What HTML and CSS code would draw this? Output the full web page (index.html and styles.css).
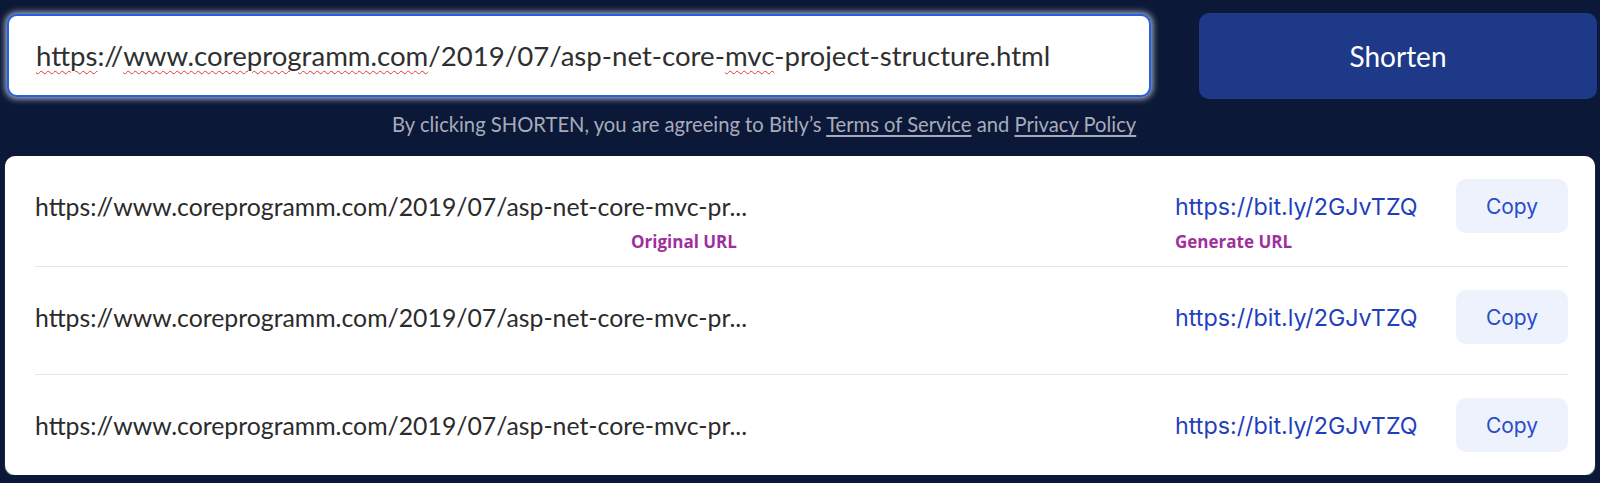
FILE: index.html
```html
<!DOCTYPE html>
<html lang="en">
<head>
<meta charset="utf-8">
<title>Bitly – Shorten</title>
<link rel="stylesheet" href="styles.css">
</head>
<body>
<div class="page">
  <div class="shorten-bar">
    <div class="url-input"><span class="spell">https</span>://<span class="spell">www.coreprogramm.com</span>/2019/07/asp-net-core-<span class="spell">mvc</span>-project-structure.html</div>
    <button class="shorten-btn">Shorten</button>
  </div>
  <p class="terms">By clicking SHORTEN, you are agreeing to Bitly’s <a href="#">Terms of Service</a> and <a href="#">Privacy Policy</a></p>

  <div class="results">
    <div class="row row--labeled">
      <div class="long-url">https://www.coreprogramm.com/2019/07/asp-net-core-mvc-pr...</div>
      <div class="short-url">https://bit.ly/2GJvTZQ</div>
      <button class="copy-btn">Copy</button>
      <div class="label label--orig">Original URL</div>
      <div class="label">Generate URL</div>
    </div>
    <div class="row">
      <div class="long-url">https://www.coreprogramm.com/2019/07/asp-net-core-mvc-pr...</div>
      <div class="short-url">https://bit.ly/2GJvTZQ</div>
      <button class="copy-btn">Copy</button>
    </div>
    <div class="row row--last">
      <div class="long-url">https://www.coreprogramm.com/2019/07/asp-net-core-mvc-pr...</div>
      <div class="short-url">https://bit.ly/2GJvTZQ</div>
      <button class="copy-btn">Copy</button>
    </div>
  </div>
</div>
</body>
</html>
```
FILE: styles.css
```css
html, body {
  margin: 0;
  padding: 0;
  background: #0c1837;
}
body {
  font-family: "Lato", "Open Sans", sans-serif;
  color: #2b2b2b;
}
.page {
  padding: 13px 3px 0 5px;
}
.shorten-bar {
  display: flex;
  align-items: flex-start;
  gap: 48px;
  padding-left: 2px;
}
.url-input {
  box-sizing: border-box;
  width: 1144px;
  height: 83px;
  margin-top: 1px;
  padding-left: 27px;
  display: flex;
  align-items: center;
  background: #ffffff;
  border: 2px solid #2360e6;
  border-radius: 10px;
  box-shadow: 0 0 6px 2px rgba(205, 212, 228, 0.8);
  font-size: 27.6px;
  color: #2f2f2f;
  white-space: nowrap;
}
.spell {
  text-decoration: underline wavy #e23a3a;
  text-decoration-thickness: 1px;
  text-underline-offset: 4px;
}
.shorten-btn {
  width: 398px;
  height: 86px;
  border: none;
  border-radius: 10px;
  background: #1d3987;
  color: #ffffff;
  font-family: "Lato", sans-serif;
  font-size: 28px;
  padding: 0;
}
.terms {
  margin: 0;
  padding: 13px 0 0 387px;
  height: 24px;
  line-height: 24px;
  font-size: 20.2px;
  color: #a7acbb;
}
.terms a {
  color: #a7acbb;
  text-decoration: underline;
  text-underline-offset: 3px;
}
.results {
  margin-top: 20px;
  width: 1590px;
  box-sizing: border-box;
  padding: 0 27px 0 30px;
  background: #ffffff;
  border-radius: 10px;
  box-shadow: 0 1px 1px rgba(160, 165, 180, 0.9);
}
.row {
  display: grid;
  grid-template-columns: 1fr 281px 112px;
  grid-template-rows: 54px;
  align-items: center;
  padding: 23px 0 30px;
  border-bottom: 1px solid #e4e4e6;
}
.row--labeled {
  padding-bottom: 16px;
}
.row--last {
  border-bottom: none;
  padding-bottom: 23px;
}
.long-url {
  font-size: 24.8px;
  color: #2b2b2b;
  white-space: nowrap;
}
.short-url {
  font-family: "Inter", sans-serif;
  font-size: 23.3px;
  color: #1f3fbe;
  white-space: nowrap;
}
.copy-btn {
  height: 54px;
  width: 112px;
  border: none;
  border-radius: 10px;
  background: #edf2fd;
  color: #2b4bc9;
  font-family: "Inter", sans-serif;
  font-size: 21px;
  padding: 0;
}
.label {
  margin-top: 0;
  font-family: "Open Sans", sans-serif;
  font-weight: 700;
  font-size: 17px;
  line-height: 17px;
  color: #9f2f9d;
  align-self: start;
}
.label--orig {
  padding-left: 596px;
}
```
